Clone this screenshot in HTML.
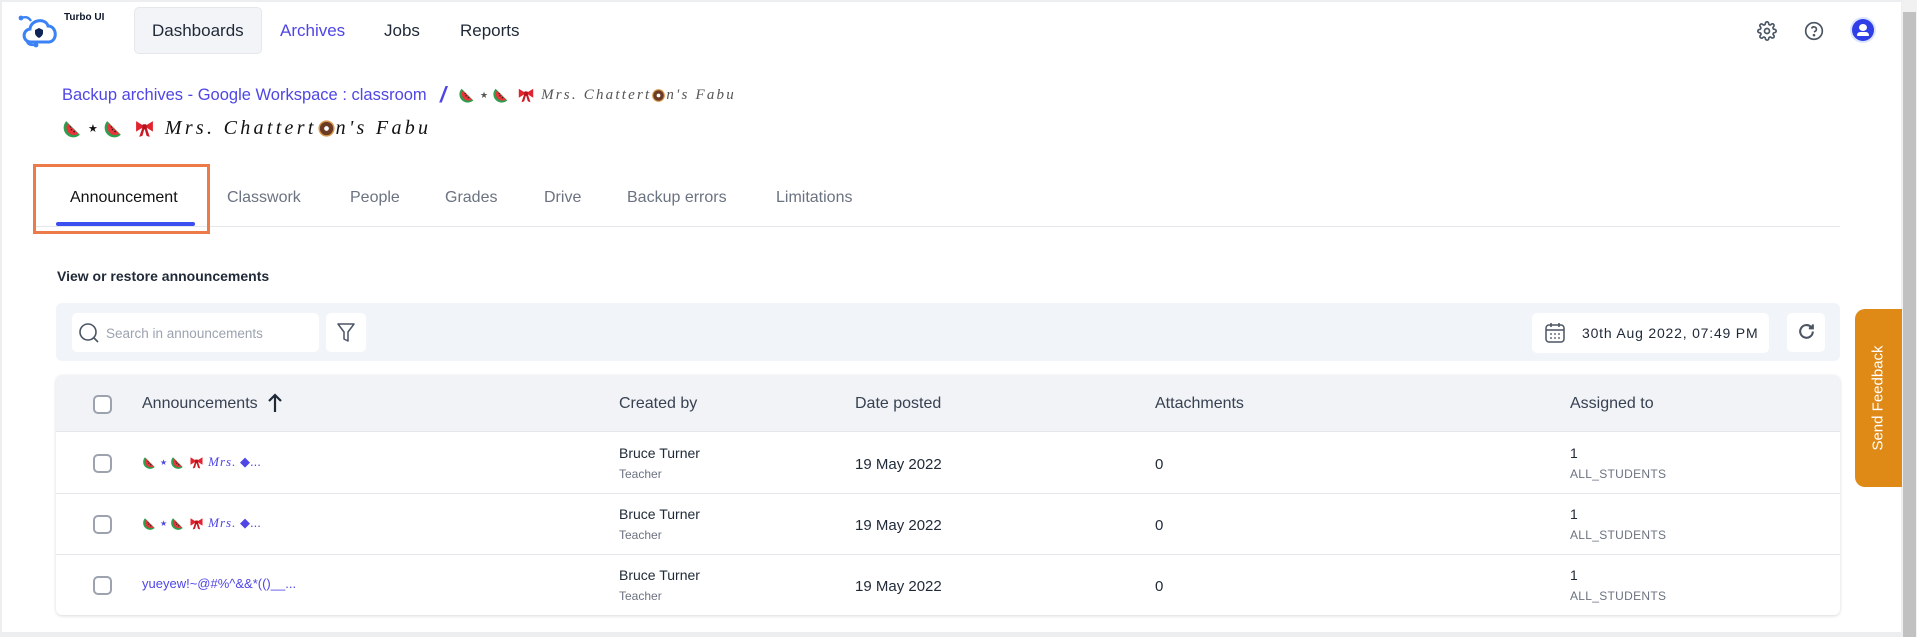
<!DOCTYPE html>
<html><head><meta charset="utf-8"><style>
*{box-sizing:border-box;margin:0;padding:0}
body{width:1917px;height:637px;overflow:hidden;background:#eceeef;font-family:"Liberation Sans",sans-serif;color:#1f2937;position:relative}
.a{position:absolute}
#page{position:absolute;left:2px;top:2px;width:1899px;height:630px;background:#fff}
.nav{font-size:17px;color:#1f2937}
.tab{font-size:16px;color:#6b7280;top:189px}
.th{font-size:16px;color:#374151;top:395px}
.cb{width:19px;height:19px;border:2px solid #9ca3af;border-radius:5px;background:#fff}
.name{font-size:14px;color:#1f2937}
.sub{font-size:12px;color:#6b7280}
.cell{font-size:15px;color:#1f2937}
.link{font-size:13px;color:#4f46e5}
.cur{font-family:"Liberation Serif",serif;font-style:italic;letter-spacing:2px}
.hr{height:1px;background:#e5e7eb}
.row{display:flex;align-items:center;white-space:nowrap}
svg.e{flex:none}
</style></head><body>
<svg width="0" height="0" style="position:absolute"><defs>
<symbol id="wm" viewBox="0 0 20 20"><path d="M4 3 L17 16 A9.2 9.2 0 0 1 4 3Z" fill="#2e9e4f"/><path d="M5.5 5 L15.5 15 A7.2 7.2 0 0 1 5.5 5Z" fill="#e8343a"/><circle cx="9" cy="11" r=".8" fill="#222"/><circle cx="11.5" cy="13" r=".8" fill="#222"/><circle cx="8" cy="8.5" r=".7" fill="#222"/></symbol>
<symbol id="bow" viewBox="0 0 20 20"><path d="M10 8 L2 3 L2 13 Z M10 8 L18 3 L18 13 Z" fill="#e0232f"/><path d="M8 9 L5 18 L8 17 L10 10 L12 17 L15 18 L12 9Z" fill="#c81a25"/><rect x="8" y="6" width="4" height="5" rx="1" fill="#b5121c"/></symbol>
<symbol id="don" viewBox="0 0 20 20"><circle cx="10" cy="10" r="8.5" fill="#d99a4e"/><circle cx="10" cy="10" r="7" fill="#6b3b24"/><circle cx="10" cy="10" r="2.5" fill="#fff"/></symbol>
</defs></svg>
<div id="page"></div>
<!-- scrollbar -->
<div class="a" style="left:1902px;top:0;width:15px;height:637px;background:#f1f1f1"></div>
<div class="a" style="left:1903px;top:12px;width:13px;height:625px;background:#c1c1c1"></div>

<!-- logo -->
<svg class="a" style="left:17px;top:12px" width="44" height="36" viewBox="0 0 44 36"><path d="M14 30 C5 30 5 18 13 17 C14 7 29 6 31 14 C40 14 41 29 32 30 Z" fill="none" stroke="#3b82f6" stroke-width="3"/><path d="M22 16 l4 2 v3 c0 3 -4 5 -4 5 c0 0 -4 -2 -4 -5 v-3z" fill="#0f2557"/><path d="M4 6 C10 4 12 6 14 9" fill="none" stroke="#3b82f6" stroke-width="2.4"/><circle cx="4" cy="6" r="2.4" fill="#3b82f6"/><path d="M10 28 C10 33 14 33 18 33" fill="none" stroke="#3b82f6" stroke-width="2.4"/><circle cx="19" cy="33" r="2.4" fill="#3b82f6"/></svg>
<div class="a" style="left:64px;top:12px;font-size:10px;font-weight:bold;color:#0f172a">Turbo UI</div>

<div class="a" style="left:134px;top:7px;width:128px;height:47px;background:#f3f4f8;border:1px solid #e5e7eb;border-radius:5px"></div>
<div class="a nav" style="left:152px;top:21px">Dashboards</div>
<div class="a nav" style="left:280px;top:21px;color:#4f46e5">Archives</div>
<div class="a nav" style="left:384px;top:21px">Jobs</div>
<div class="a nav" style="left:460px;top:21px">Reports</div>

<!-- right icons -->
<svg class="a" style="left:1757px;top:21px" width="20" height="20" viewBox="0 0 24 24" fill="none" stroke="#4b5563" stroke-width="2"><circle cx="12" cy="12" r="3"/><path d="M19.4 15a1.7 1.7 0 0 0 .3 1.8l.1.1a2 2 0 1 1-2.8 2.8l-.1-.1a1.7 1.7 0 0 0-1.8-.3 1.7 1.7 0 0 0-1 1.5V21a2 2 0 1 1-4 0v-.1a1.7 1.7 0 0 0-1.1-1.5 1.7 1.7 0 0 0-1.8.3l-.1.1a2 2 0 1 1-2.8-2.8l.1-.1a1.7 1.7 0 0 0 .3-1.8 1.7 1.7 0 0 0-1.5-1H3a2 2 0 1 1 0-4h.1a1.7 1.7 0 0 0 1.5-1.1 1.7 1.7 0 0 0-.3-1.8l-.1-.1a2 2 0 1 1 2.8-2.8l.1.1a1.7 1.7 0 0 0 1.8.3H9a1.7 1.7 0 0 0 1-1.5V3a2 2 0 1 1 4 0v.1a1.7 1.7 0 0 0 1 1.5 1.7 1.7 0 0 0 1.8-.3l.1-.1a2 2 0 1 1 2.8 2.8l-.1.1a1.7 1.7 0 0 0-.3 1.8V9a1.7 1.7 0 0 0 1.5 1H21a2 2 0 1 1 0 4h-.1a1.7 1.7 0 0 0-1.5 1z"/></svg>
<svg class="a" style="left:1804px;top:21px" width="20" height="20" viewBox="0 0 24 24" fill="none" stroke="#4b5563" stroke-width="2"><circle cx="12" cy="12" r="10"/><path d="M9.1 9a3 3 0 0 1 5.8 1c0 2-3 3-3 3"/><circle cx="12" cy="17" r=".6" fill="#4b5563"/></svg>
<div class="a" style="left:1850px;top:17px;width:26px;height:26px;border-radius:50%;background:#dbe4ff"></div>
<div class="a" style="left:1852px;top:19px;width:22px;height:22px;border-radius:50%;background:#2f3ee6;overflow:hidden">
 <div class="a" style="left:7px;top:5px;width:8px;height:7px;border-radius:50%;background:#fff"></div>
 <div class="a" style="left:5px;top:13px;width:12px;height:4px;border-radius:4px 4px 1px 1px;background:#fff"></div>
</div>

<!-- breadcrumb -->
<div class="a" style="left:62px;top:86px;font-size:16.5px;color:#4f46e5">Backup archives - Google Workspace : classroom</div>
<div class="a" style="left:440px;top:82px;font-size:22px;color:#4f46e5;font-style:italic;font-weight:bold">/</div>
<div class="a row" style="left:458px;top:85px;height:20px;font-size:15px;color:#555">
<svg class="e" width="18" height="18"><use href="#wm"/></svg><span style="font-size:9px;margin:0 4px">★</span><svg class="e" width="18" height="18"><use href="#wm"/></svg><svg class="e" width="18" height="18" style="margin-left:7px"><use href="#bow"/></svg><span class="cur" style="margin-left:6px;letter-spacing:2.2px">Mrs. Chattert</span><svg class="e" width="15" height="15"><use href="#don"/></svg><span class="cur" style="letter-spacing:2.2px">n's Fabu</span></div>
<div class="a row" style="left:62px;top:116px;height:24px;font-size:20px;color:#111">
<svg class="e" width="21" height="21"><use href="#wm"/></svg><span style="font-size:11px;margin:0 5px">★</span><svg class="e" width="21" height="21"><use href="#wm"/></svg><svg class="e" width="21" height="21" style="margin-left:10px"><use href="#bow"/></svg><span class="cur" style="margin-left:10px;letter-spacing:3.3px">Mrs. Chattert</span><svg class="e" width="19" height="19"><use href="#don"/></svg><span class="cur" style="letter-spacing:3.3px">n's Fabu</span></div>

<!-- tabs -->
<div class="a hr" style="left:33px;top:226px;width:1807px;background:#e5e7eb"></div>
<div class="a" style="left:33px;top:164px;width:177px;height:70px;border:3px solid #ed7a49"></div>
<div class="a tab" style="left:70px;color:#111;font-weight:500">Announcement</div>
<div class="a" style="left:56px;top:222px;width:139px;height:4px;background:#3b4ef0;border-radius:2px"></div>
<div class="a tab" style="left:227px">Classwork</div>
<div class="a tab" style="left:350px">People</div>
<div class="a tab" style="left:445px">Grades</div>
<div class="a tab" style="left:544px">Drive</div>
<div class="a tab" style="left:627px">Backup errors</div>
<div class="a tab" style="left:776px">Limitations</div>

<div class="a" style="left:57px;top:268px;font-size:14px;color:#1f2937;font-weight:bold">View or restore announcements</div>

<!-- toolbar -->
<div class="a" style="left:56px;top:303px;width:1784px;height:58px;background:#f1f4f8;border-radius:6px"></div>
<div class="a" style="left:72px;top:313px;width:247px;height:39px;background:#fff;border-radius:5px"></div>
<svg class="a" style="left:78px;top:322px" width="22" height="22" viewBox="0 0 22 22" fill="none" stroke="#4b5563" stroke-width="1.6"><circle cx="10" cy="10" r="8"/><path d="M16 16l4 4"/></svg>
<div class="a" style="left:106px;top:326px;font-size:13.5px;color:#9ca3af">Search in announcements</div>
<div class="a" style="left:326px;top:313px;width:40px;height:39px;background:#fff;border-radius:5px"></div>
<svg class="a" style="left:337px;top:323px" width="18" height="20" viewBox="0 0 18 20" fill="none" stroke="#4b5563" stroke-width="1.5" stroke-linejoin="round"><path d="M1 1h16l-6 8v9l-4-2V9z"/></svg>
<div class="a" style="left:1532px;top:313px;width:237px;height:40px;background:#fff;border-radius:5px"></div>
<svg class="a" style="left:1545px;top:322px" width="20" height="22" viewBox="0 0 20 22" fill="none" stroke="#4b5563" stroke-width="1.5"><rect x="1" y="3" width="18" height="17" rx="3"/><path d="M1 8h18M6 1v4M14 1v4"/><path d="M5 12h2M9 12h2M13 12h2M5 16h2M9 16h2M13 16h2" stroke-width="1.2"/></svg>
<div class="a" style="left:1582px;top:325px;font-size:14px;color:#1f2937;letter-spacing:.8px">30th Aug 2022, 07:49 PM</div>
<div class="a" style="left:1787px;top:313px;width:38px;height:39px;background:#fff;border-radius:5px"></div>
<svg class="a" style="left:1797px;top:322px" width="19" height="19" viewBox="0 0 24 24" fill="none" stroke="#4b5563" stroke-width="2.6"><path d="M20 12a8 8 0 1 1-2.3-5.7"/><path d="M20 3v5h-5" fill="#4b5563"/></svg>

<!-- table -->
<div class="a" style="left:56px;top:375px;width:1784px;height:240px;background:#fff;border-radius:6px;box-shadow:0 1px 3px rgba(0,0,0,.15);overflow:hidden">
 <div class="a" style="left:0;top:0;width:1784px;height:57px;background:#f1f3f7;border-bottom:1px solid #e5e7eb"></div>
 <div class="a hr" style="left:0;top:118px;width:1784px"></div>
 <div class="a hr" style="left:0;top:179px;width:1784px"></div>
</div>
<div class="a cb" style="left:93px;top:395px"></div>
<div class="a th" style="left:142px">Announcements</div>
<svg class="a" style="left:268px;top:393px" width="14" height="20" viewBox="0 0 14 20" fill="none" stroke="#1f2937" stroke-width="2.2"><path d="M7 19V2M1 8l6-6 6 6"/></svg>
<div class="a th" style="left:619px">Created by</div>
<div class="a th" style="left:855px">Date posted</div>
<div class="a th" style="left:1155px">Attachments</div>
<div class="a th" style="left:1570px">Assigned to</div>

<!-- rows -->
<div class="a cb" style="left:93px;top:454px"></div>
<div class="a link row" style="left:142px;top:454px"><svg class="e" width="15" height="15"><use href="#wm"/></svg><span style="font-size:8px;margin:0 3px">★</span><svg class="e" width="15" height="15"><use href="#wm"/></svg><svg class="e" width="15" height="15" style="margin-left:4px"><use href="#bow"/></svg><span class="cur" style="letter-spacing:1px;margin-left:4px">Mrs.</span>&nbsp;◆...</div>
<div class="a name" style="left:619px;top:445px">Bruce Turner</div>
<div class="a sub" style="left:619px;top:467px">Teacher</div>
<div class="a cell" style="left:855px;top:456px">19 May 2022</div>
<div class="a cell" style="left:1155px;top:456px">0</div>
<div class="a name" style="left:1570px;top:445px">1</div>
<div class="a sub" style="left:1570px;top:467px;letter-spacing:.3px">ALL_STUDENTS</div>

<div class="a cb" style="left:93px;top:515px"></div>
<div class="a link row" style="left:142px;top:515px"><svg class="e" width="15" height="15"><use href="#wm"/></svg><span style="font-size:8px;margin:0 3px">★</span><svg class="e" width="15" height="15"><use href="#wm"/></svg><svg class="e" width="15" height="15" style="margin-left:4px"><use href="#bow"/></svg><span class="cur" style="letter-spacing:1px;margin-left:4px">Mrs.</span>&nbsp;◆...</div>
<div class="a name" style="left:619px;top:506px">Bruce Turner</div>
<div class="a sub" style="left:619px;top:528px">Teacher</div>
<div class="a cell" style="left:855px;top:517px">19 May 2022</div>
<div class="a cell" style="left:1155px;top:517px">0</div>
<div class="a name" style="left:1570px;top:506px">1</div>
<div class="a sub" style="left:1570px;top:528px;letter-spacing:.3px">ALL_STUDENTS</div>

<div class="a cb" style="left:93px;top:576px"></div>
<div class="a link" style="left:142px;top:576px">yueyew!~@#%^&amp;&amp;*(()__...</div>
<div class="a name" style="left:619px;top:567px">Bruce Turner</div>
<div class="a sub" style="left:619px;top:589px">Teacher</div>
<div class="a cell" style="left:855px;top:578px">19 May 2022</div>
<div class="a cell" style="left:1155px;top:578px">0</div>
<div class="a name" style="left:1570px;top:567px">1</div>
<div class="a sub" style="left:1570px;top:589px;letter-spacing:.3px">ALL_STUDENTS</div>

<!-- feedback -->
<div class="a" style="left:1855px;top:309px;width:47px;height:178px;background:#df8a17;border-radius:10px 0 0 10px"></div>
<div class="a" style="left:1878px;top:398px;transform:translate(-50%,-50%) rotate(-90deg);color:#fff;font-size:15px;white-space:nowrap">Send Feedback</div>
</body></html>
